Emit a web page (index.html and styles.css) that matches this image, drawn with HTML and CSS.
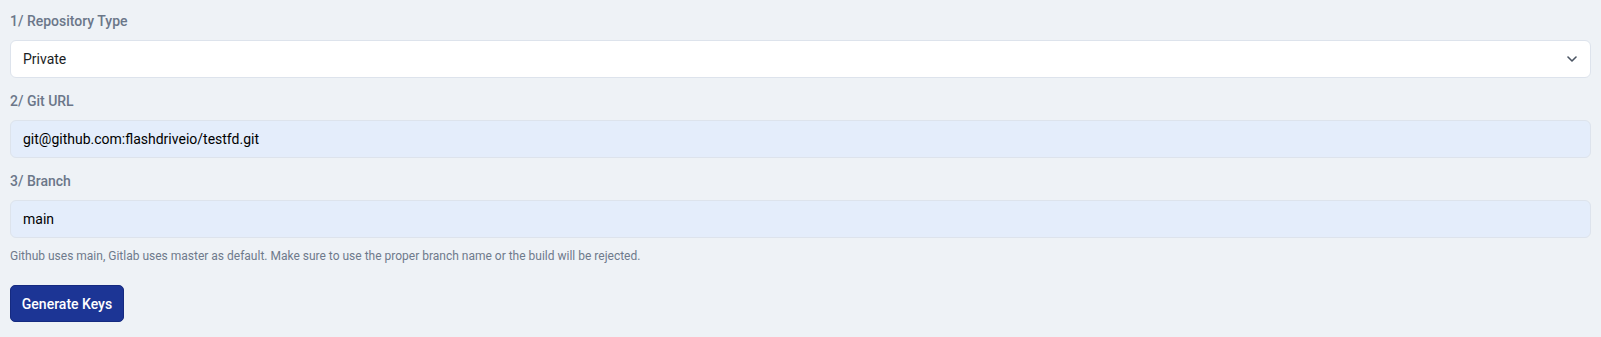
FILE: index.html
```html
<!DOCTYPE html>
<html>
<head>
<meta charset="utf-8">
<link rel="stylesheet" href="styles.css">
</head>
<body>
<form class="form">
  <div class="field">
    <label class="label">1/ Repository Type</label>
    <div class="select">
      <span class="value">Private</span>
      <svg class="chev" width="10" height="6" viewBox="0 0 10 6"><path d="M1 1l4 4 4-4" fill="none" stroke="#4b5563" stroke-width="1.6" stroke-linecap="round" stroke-linejoin="round"/></svg>
    </div>
  </div>
  <div class="field">
    <label class="label">2/ Git URL</label>
    <div class="input filled">git@github.com:flashdriveio/testfd.git</div>
  </div>
  <div class="field last">
    <label class="label">3/ Branch</label>
    <div class="input filled">main</div>
  </div>
  <p class="help">Github uses main, Gitlab uses master as default. Make sure to use the proper branch name or the build will be rejected.</p>
  <button type="button" class="btn">Generate Keys</button>
</form>
</body>
</html>
```
FILE: styles.css
```css
* { box-sizing: border-box; }
html, body { margin: 0; padding: 0; }
body {
  background: #eef2f6;
  font-family: Roboto, "Noto Sans", sans-serif;
  width: 1601px;
  height: 337px;
  overflow: hidden;
}
.form {
  padding: 11px 10px 0 10px;
  display: flex;
  flex-direction: column;
}
.field { display: flex; flex-direction: column; margin-bottom: 13px; }
.field.last { margin-bottom: 0; }
.label {
  font-size: 14px;
  line-height: 20px;
  font-weight: 500;
  color: #6b7789;
  margin-bottom: 9px;
}
.select, .input {
  height: 38px;
  border: 1px solid #dde3ec;
  border-radius: 6px;
  display: flex;
  align-items: center;
  padding: 0 12px;
  font-size: 14px;
  color: #1a1d23;
}
.select { background: #ffffff; justify-content: space-between; padding-right: 13px; }
.input.filled { background: #e4edfb; color: #000; }
.chev { display: block; }
.help {
  margin: 10px 0 0 0;
  font-size: 12px;
  line-height: 16px;
  color: #6e7a8c;
}
.btn {
  margin-top: 21px;
  align-self: flex-start;
  width: 114px;
  height: 37px;
  background: #1c3595;
  color: #fff;
  border: 1px solid #152a80;
  border-radius: 5px;
  font-family: Roboto, "Noto Sans", sans-serif;
  font-size: 14px;
  font-weight: 500;
  padding: 0;
}
```
